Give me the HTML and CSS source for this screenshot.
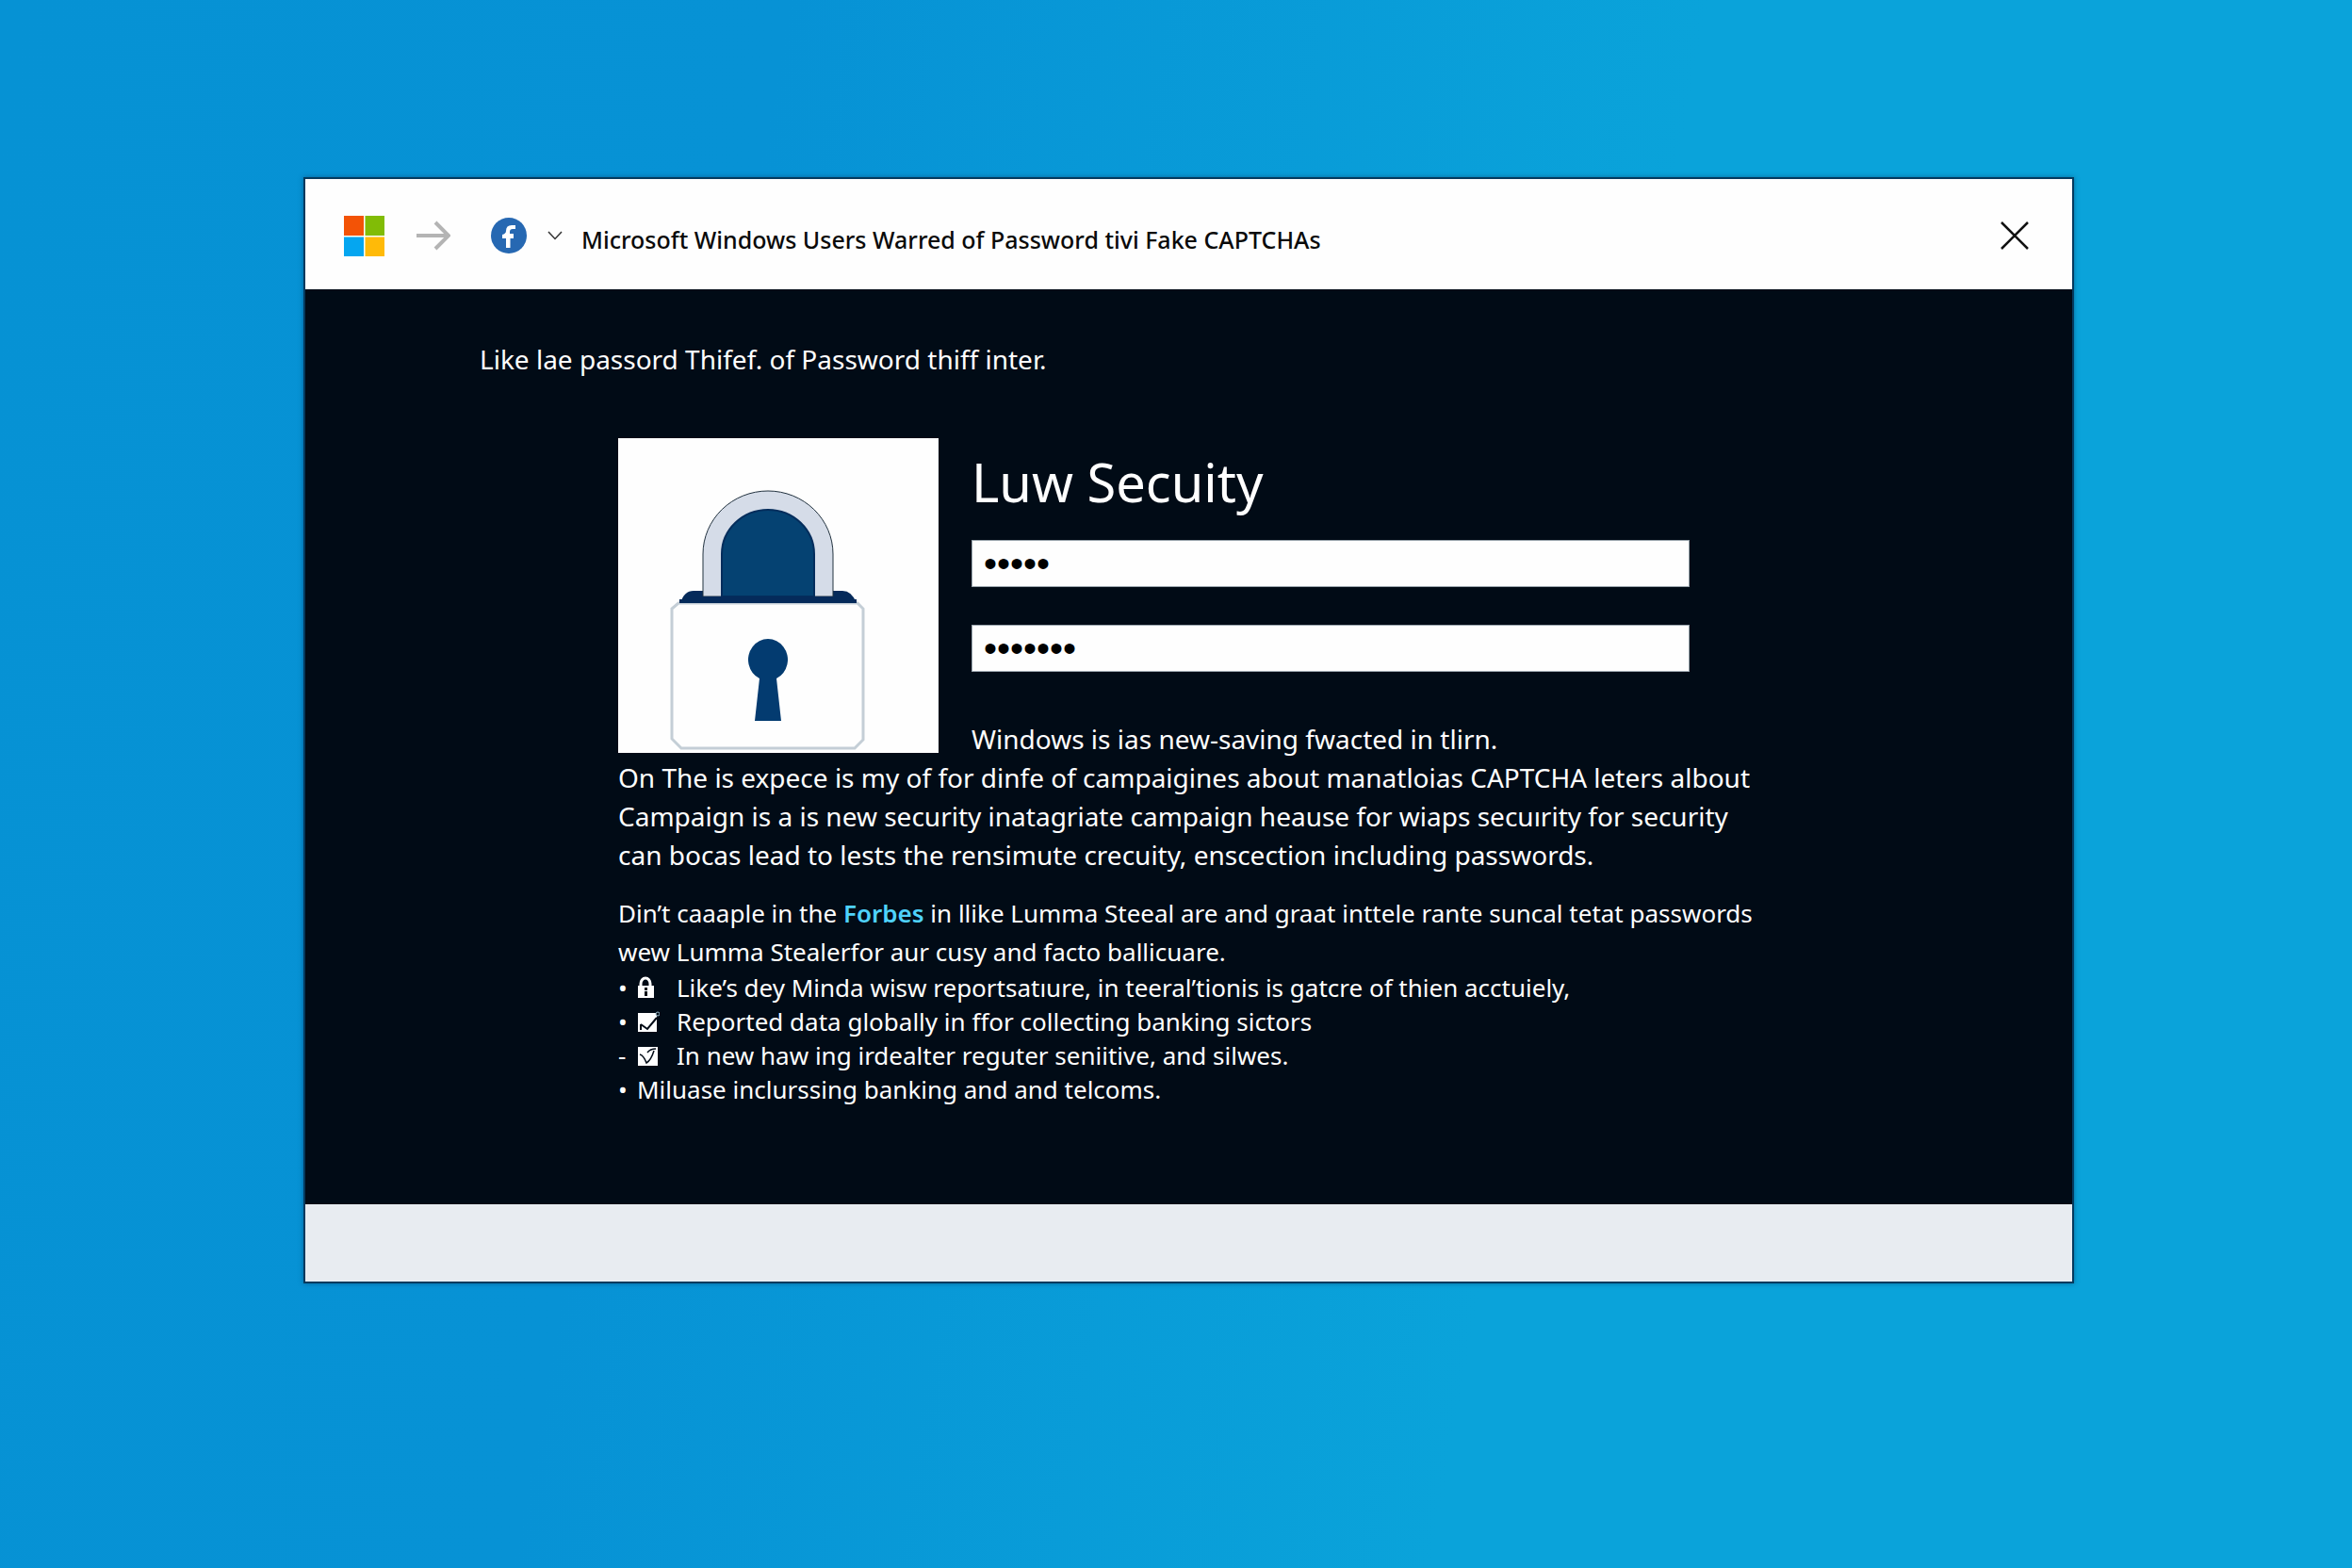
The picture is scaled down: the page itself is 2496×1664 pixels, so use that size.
FILE: index.html
```
<!DOCTYPE html>
<html lang="en">
<head>
    <meta charset="UTF-8">
    <meta name="viewport" content="width=device-width, initial-scale=1.0">
    <title>Microsoft Windows Users</title>
    <link rel="stylesheet" href="styles.css">
</head>
<body>
    <div class="window">
        <header class="title-bar">
            <svg class="logo" viewBox="0 0 43 43">
                <rect width="21" height="21" fill="#f35306"/>
                <rect x="22.500" width="20.500" height="21" fill="#81bc06"/>
                <rect y="22.500" width="21" height="20.500" fill="#05a6f0"/>
                <rect x="22.500" y="22.500" width="20.500" height="20.500" fill="#ffba08"/>
            </svg>
            <svg class="arrow" viewBox="0 0 36 32">
                <path d="M0 16H32M20 2L34 16L20 30" fill="none" stroke="#b4b4b4" stroke-width="4"/>
            </svg>
            <svg class="badge" viewBox="0 0 38 38">
                <circle cx="19" cy="19" r="19" fill="#2668b2"/>
                <path d="M16 32V22H12V18Q16 17 16 14Q16 8 22 8H26V12H23Q20 12 20 15V17H24V22H20.500V32Z" fill="#fff"/>
            </svg>
            <svg class="chevron" viewBox="0 0 16 10">
                <path d="M1 1L8 8.500L15 1" fill="none" stroke="#333" stroke-width="1.500"/>
            </svg>
            <h1 class="title">Microsoft Windows Users Warred of Password tivi Fake CAPTCHAs</h1>
            <button class="close" aria-label="Close">
                <svg viewBox="0 0 30 30">
                    <path d="M1 1L29 29M29 1L1 29" fill="none" stroke="#111" stroke-width="2.500"/>
                </svg>
            </button>
        </header>

        <main class="content">
            <p class="intro">Like lae passord Thifef. of Password thiff inter.</p>

            <div class="article">
                <div class="login">
                    <svg class="picture" viewBox="0 0 340 334">
                        <rect width="340" height="334" fill="#fefefe"/>
                        <path d="M66 175Q70 162 80 162H238Q248 162 253 175Z" fill="#052a5a"/>
                        <path d="M90 168V123A69 67 0 0 1 228 123V168Z" fill="#d5dce8" stroke="#22323f" stroke-width="1"/>
                        <path d="M110 168V123A49 47 0 0 1 208 123V168Z" fill="#054272" stroke="#042d5c" stroke-width="2"/>
                        <path d="M80 168H240V175H80Z" fill="#052a5a"/>
                        <path d="M64 175H254L260 181V320L251 329H67L57 319V181Z" fill="#fefefe" stroke="#c4ced6" stroke-width="3"/>
                        <path d="M65 173H253" stroke="#052a5a" stroke-width="4"/>
                        <path d="M150 255A21 22 0 1 1 168 255L173 300H145Z" fill="#033b70"/>
                    </svg>
                    <form class="fields">
                        <h2 class="heading">Luw Secuity</h2>
                        <input class="field" type="password" value="aaaaa" aria-label="Password">
                        <input class="field" type="password" value="aaaaaaa" aria-label="Repeat password">
                        <p class="note">Windows is ias new-saving fwacted in tlirn.</p>
                    </form>
                </div>

                <p class="text lead">
                    On The is expece is my of for dinfe of campaigines about manatloias CAPTCHA leters albout<br>
                    Campaign is a is new security inatagriate campaign heause for wiaps secuırity for security<br>
                    can bocas lead to lests the rensimute crecuity, enscection including passwords.
                </p>
                <p class="text">
                    Din’t caaaple in the <a class="link" href="#">Forbes</a> in llike Lumma Steeal are and graat inttele rante suncal tetat passwords<br>
                    wew Lumma Stealerfor aur cusy and facto ballicuare.
                </p>
                <ul class="list">
                    <li class="item">
                        <span class="mark">•</span>
                        <svg class="icon" viewBox="0 0 24 24">
                            <path d="M4 11V8A5 6 0 0 1 14 8V11" fill="none" stroke="#fff" stroke-width="3"/>
                            <path d="M1 10H18V23H1Z" fill="#fff"/>
                            <path d="M9.500 12V15M9.500 16V21" stroke="#010b16" stroke-width="3"/>
                        </svg>
                        Like’s dey Minda wisw reportsatıure, in teeral’tionis is gatcre of thien acctuiely,
                    </li>
                    <li class="item">
                        <span class="mark">•</span>
                        <svg class="icon" viewBox="0 0 24 24">
                            <path d="M1 3H21V23H1Z" fill="#fff"/>
                            <path d="M4 15V21M4 15L11 20L21 8" fill="none" stroke="#010b16" stroke-width="2"/>
                            <circle cx="22" cy="4" r="2" fill="#010b16" stroke="#9fc0d0" stroke-width="1"/>
                        </svg>
                        Reported data globally in ffor collecting banking sictors
                    </li>
                    <li class="item">
                        <span class="mark">-</span>
                        <svg class="icon" viewBox="0 0 24 24">
                            <path d="M1 3H22V23H1Z" fill="#fff"/>
                            <path d="M3 11Q7 12 10 20Q15 17 18 7M11 9Q14 5 20 5" fill="none" stroke="#010b16" stroke-width="1.500"/>
                        </svg>
                        In new haw ing irdealter reguter seniitive, and silwes.
                    </li>
                    <li class="item">
                        <span class="mark">•</span>
                        Miluase inclurssing banking and and telcoms.
                    </li>
                </ul>
            </div>
        </main>

        <footer class="status-bar"></footer>
    </div>
</body>
</html>
```
FILE: styles.css
```
* {
    box-sizing: border-box;
}
body {
    margin: 0;
    min-height: 100vh;
    padding: 188px 295px 0 322px;
    background: linear-gradient(100deg, #0692d4 0%, #0792d5 30%, #0aa3da 65%, #0aa3da 100%);
    font-family: "Noto Sans", "Open Sans", sans-serif;
    font-size: 26px;
    line-height: 41px;
    color: #fff;
}
h1, h2, p, ul {
    margin: 0;
    padding: 0;
    font-weight: 400;
}
.window {
    border: 2px solid #053a5e;
    background: #010b16;
    box-shadow: 0 0 5px rgba(0, 50, 90, 0.5);
}
.title-bar {
    display: flex;
    align-items: center;
    height: 117px;
    padding: 3px 46px 0 41px;
    background: #fefefe;
    color: #0a0a0a;
}
.logo {
    width: 43px;
    height: 43px;
    margin-right: 34px;
}
.arrow {
    width: 36px;
    height: 32px;
    margin-right: 43px;
}
.badge {
    width: 38px;
    height: 38px;
    margin-right: 22px;
}
.chevron {
    width: 16px;
    height: 10px;
    margin-right: 20px;
}
.title {
    flex: 1;
    padding-top: 8px;
    font-size: 25px;
    font-weight: 500;
}
.close {
    width: 30px;
    height: 30px;
    padding: 0;
    border: none;
    background: none;
    cursor: pointer;
}
.close svg {
    display: block;
}
.content {
    padding: 54px 185px 104px;
}
.intro, .note, .lead {
    font-size: 28px;
}
.article {
    padding: 63px 0 0 147px;
}
.login {
    display: flex;
    align-items: flex-start;
    gap: 35px;
}
.picture {
    width: 340px;
    height: 334px;
    flex-shrink: 0;
}
.fields {
    display: flex;
    flex-direction: column;
    width: 762px;
    padding-top: 4px;
}
.heading {
    margin-bottom: 20px;
    font-size: 56px;
    line-height: 84px;
}
.field {
    height: 50px;
    margin-bottom: 40px;
    padding: 0 12px;
    border: 1px solid #9aa5ad;
    border-radius: 0;
    background: #fefefe;
    color: #000;
    font-family: "Liberation Sans", sans-serif;
    font-size: 40px;
}
.note {
    margin-top: 11px;
}
.text {
    white-space: nowrap;
}
.lead {
    margin-bottom: 21px;
}
.link {
    color: #4fd2fb;
    font-weight: 600;
    text-decoration: none;
}
.list {
    margin-top: -1px;
    list-style: none;
    line-height: 36px;
}
.item {
    display: flex;
    align-items: center;
    white-space: nowrap;
}
.mark {
    width: 20px;
}
.icon {
    width: 24px;
    height: 24px;
    margin-right: 18px;
}
.status-bar {
    height: 82px;
    background: #e8ecf1;
}
```
